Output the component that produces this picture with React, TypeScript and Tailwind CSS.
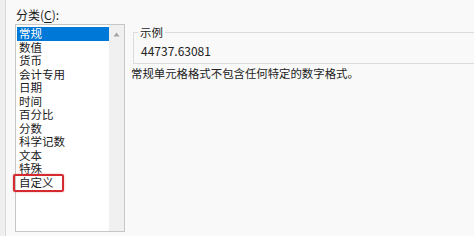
const items = ["常规", "数值", "货币", "会计专用", "日期", "时间", "百分比", "分数", "科学记数", "文本", "特殊", "自定义"]

export default function App() {
  return (
    <div
      className="w-[474px] h-[236px] bg-[#f9f9f9] flex overflow-hidden text-[12px] text-[#1b1b1b]"
      style={{ fontFamily: '"Noto Sans CJK SC", "Noto Sans", sans-serif' }}
    >
      {/* left window edge */}
      <div className="w-[6px] h-full bg-[#efefef] border-r border-[#d8d8d8] shrink-0" />

      {/* category list */}
      <div className="pl-[9px] pt-[6px] flex flex-col shrink-0">
        <div className="h-[17px] leading-[17px] pl-[1px]">
          分类(<span className="underline underline-offset-2">C</span>):
        </div>
        <div className="mt-[1px] w-[110px] h-[208px] bg-white border border-[#c6c6c6] flex">
          <ul className="flex-1 pt-[2px] pl-[1px] text-[11.5px]">
            {items.map((it, i) => (
              <li
                key={it}
                className={
                  i === 0
                    ? "h-[13.55px] leading-[13.55px] pl-[2px] bg-[#0078d7] text-white"
                    : "relative h-[13.55px] leading-[13.55px] pl-[2px]"
                }
              >
                {it}
                {it === "自定义" && (
                  <span className="absolute left-[-4px] top-[-2px] w-[51px] h-[18px] border-2 border-[#d52a2f] rounded-[2px] shadow-[0_0_2px_rgba(200,40,40,0.4)]" />
                )}
              </li>
            ))}
          </ul>
          <div className="w-[15px] h-full bg-[#f0f0f0] flex justify-center pt-[7px]">
            <svg width="7" height="5" viewBox="0 0 7 5">
              <path d="M3.5 0.5 L6.5 4.5 L0.5 4.5 Z" fill="#a3a3a3" />
            </svg>
          </div>
        </div>
      </div>

      {/* sample + description */}
      <div className="pl-[8px] pt-[25px] flex flex-col shrink-0 text-[11.4px]">
        <fieldset className="w-[360px] h-[39px] border border-[#dcdcdc] pl-[7px]">
          <legend className="-ml-[3px] px-[2px] leading-[14px] text-[#1b1b1b]">示例</legend>
          <div className="pt-[5px] leading-[14px] text-[12px] text-[#222]">44737.63081</div>
        </fieldset>
        <div className="mt-[1px] -ml-[2px] leading-[16px] text-[#222]">常规单元格格式不包含任何特定的数字格式。</div>
      </div>
    </div>
  )
}
